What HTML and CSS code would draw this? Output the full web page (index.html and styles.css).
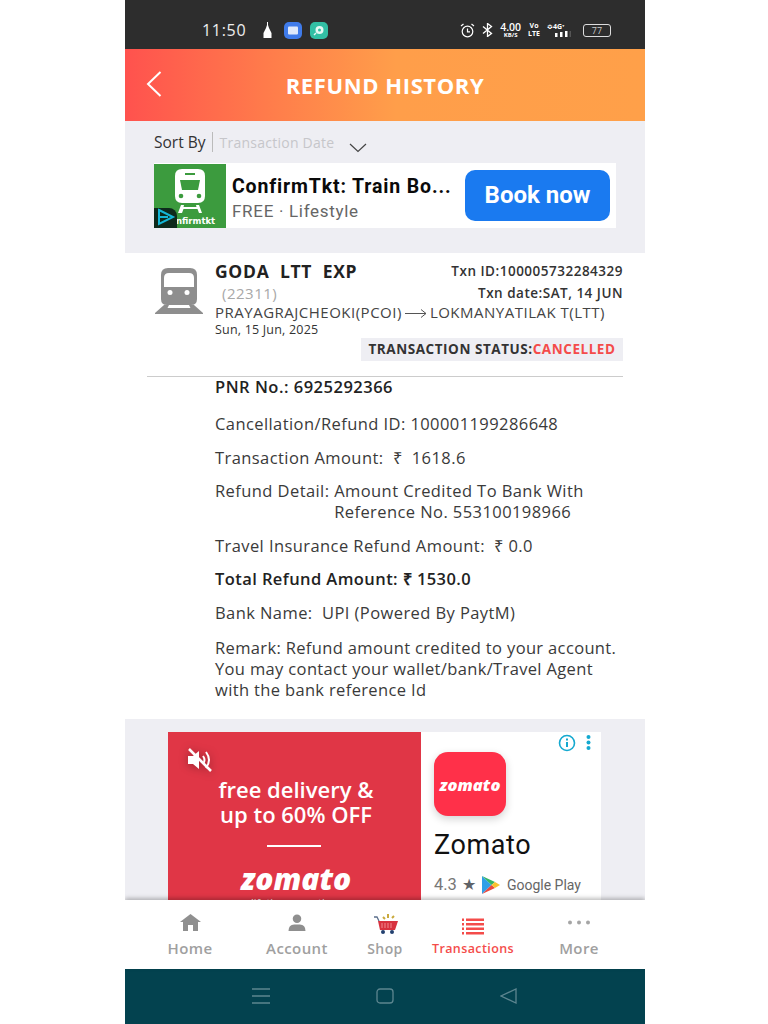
FILE: index.html
```html
<!DOCTYPE html>
<html lang="en">
<head>
    <meta charset="UTF-8">
    <meta name="viewport" content="width=device-width, initial-scale=1.0">
    <title>Refund History</title>
    <link rel="stylesheet" href="styles.css">
</head>
<body>
    <div class="phone">
        <div class="status-bar">
            <div class="status-left">
                <span class="clock">11:50</span>
                <svg class="st-bottle" width="9" height="16" viewBox="0 0 9 16"><path d="M4 0h1v3l1 3 2.500 5v5H.5v-5L3 6l1-3z" fill="#fff"/></svg>
                <svg width="18" height="17" viewBox="0 0 18 17"><rect width="18" height="17" rx="5" fill="#3f7bea"/><rect x="4" y="4.500" width="10" height="8" rx="1" fill="#dfe9fb"/></svg>
                <svg width="18" height="17" viewBox="0 0 18 17"><rect width="18" height="17" rx="5" fill="#32bfa4"/><circle cx="9.500" cy="8" r="4" fill="#e6f8f4"/><circle cx="9.500" cy="8" r="1.500" fill="#32bfa4"/><path d="M6 11l-2 2" stroke="#e6f8f4" stroke-width="1.500"/></svg>
            </div>
            <div class="status-right">
                <svg width="15" height="15" viewBox="0 0 15 15" fill="none" stroke="#fff" stroke-width="1.200"><circle cx="7.500" cy="8.500" r="5.300"/><path d="M7.500 5.500v3.300h2.500M1 3l2.500-2M14 3l-2.500-2"/></svg>
                <svg width="11" height="14" viewBox="0 0 11 14" fill="none" stroke="#fff" stroke-width="1.300"><path d="M1 3.500l8.500 7L5.500 13.500V.5L9.500 3.500 1 10.500"/></svg>
                <div class="speed"><span>4.00</span><small>KB/S</small></div>
                <div class="volte"><span>Vo</span><span>LTE</span></div>
                <div class="net">
                    <span class="net-label">≎4G⁺</span>
                    <svg width="24" height="6" viewBox="0 0 24 6" fill="#fff"><rect x="8" y="2" width="2.500" height="4"/><rect x="13" y="1" width="2.500" height="5"/><rect x="18" y="0" width="2.500" height="6"/><rect x="22.500" y="0" width="1.500" height="6" fill="#555"/></svg>
                </div>
                <div class="battery"><span>77</span></div>
            </div>
        </div>

        <div class="top-header">
            <svg class="back" width="18" height="28" viewBox="0 0 18 28" fill="none" stroke="#fff" stroke-width="2"><path d="M15.500 2L3 14l12.500 12"/></svg>
            <span class="top-title">REFUND HISTORY</span>
        </div>

        <div class="sort-section">
            <div class="sort-row">
                <span class="sort-label">Sort By</span>
                <span class="sort-value">Transaction Date</span>
                <svg class="chevron" width="18" height="10" viewBox="0 0 18 10" fill="none" stroke="#444" stroke-width="1.200"><path d="M1 1l8 7.500L17 1"/></svg>
            </div>
            <div class="ad-banner">
                <div class="ad-logo">
                    <svg width="32" height="44" viewBox="0 0 32 44" fill="#fff"><path d="M8 0h16q7 0 7 7v20q0 7-7 7H8q-7 0-7-7V7q0-7 7-7z"/><path d="M6 11h20l-2 10H8z" fill="#3c9b3e"/><rect x="11" y="4" width="10" height="2" fill="#3c9b3e"/><circle cx="7" cy="27" r="2.300" fill="#3c9b3e"/><circle cx="25" cy="27" r="2.300" fill="#3c9b3e"/><path d="M7 36h3l-.5 2h13l-.5-2h3l3 8h-3l-1.500-4H9.500L8 44H4z"/></svg>
                    <span class="ad-logo-text">nfirmtkt</span>
                    <div class="play-badge">
                        <svg width="20" height="18" viewBox="0 0 20 18" fill="none" stroke="#14b6d6" stroke-width="2"><path d="M3 2l14 7-14 7zM3 9h9"/></svg>
                    </div>
                </div>
                <div class="ad-text">
                    <div class="ad-title">ConfirmTkt: Train Bo...</div>
                    <div class="ad-sub">FREE · Lifestyle</div>
                </div>
                <div class="book-btn">Book now</div>
            </div>
        </div>

        <div class="card">
            <div class="train-row">
                <svg class="train-icon" width="48" height="46" viewBox="0 0 48 46" fill="#8e8e8e"><path d="M13 0h22q7 0 7 7v24q0 6-6 6H12q-6 0-6-6V7q0-7 7-7z"/><path d="M14 5h20q5 0 5 5v9H9v-9q0-5 5-5z" fill="#fff"/><circle cx="15" cy="24.500" r="2.500" fill="#fff"/><circle cx="32" cy="24.500" r="2.500" fill="#fff"/><path d="M9 37h5l-1.500 3h23L34 37h5l9 8v1H0v-1z"/></svg>
                <div class="train-info">
                    <div class="line-one">
                        <span class="train-name">GODA&nbsp; LTT&nbsp; EXP</span>
                        <span class="txn">Txn ID:100005732284329</span>
                    </div>
                    <div class="line-two">
                        <span class="train-no">(22311)</span>
                        <span class="txn">Txn date:SAT, 14 JUN</span>
                    </div>
                    <div class="route">
                        <span>PRAYAGRAJCHEOKI(PCOI)</span>
                        <svg width="22" height="10" viewBox="0 0 22 10" fill="none" stroke="#555" stroke-width="1"><path d="M0 5.500h21M16 1.500l5 4-5 4"/></svg>
                        <span>LOKMANYATILAK T(LTT)</span>
                    </div>
                    <div class="journey-date">Sun, 15 Jun, 2025</div>
                </div>
            </div>
            <div class="status-wrap">
                <div class="txn-status">TRANSACTION STATUS:<span class="cancelled">CANCELLED</span></div>
            </div>
            <div class="divider"></div>
            <div class="details">
                <p class="pnr">PNR No.: 6925292366</p>
                <p class="d-row first">Cancellation/Refund ID: 100001199286648</p>
                <p class="d-row">Transaction Amount:&nbsp; ₹&nbsp; 1618.6</p>
                <div class="d-row refund-detail">
                    <span>Refund Detail:&nbsp;</span>
                    <span>Amount Credited To Bank With<br>Reference No. 553100198966</span>
                </div>
                <p class="d-row">Travel Insurance Refund Amount:&nbsp; ₹ 0.0</p>
                <p class="d-row total">Total Refund Amount: ₹ 1530.0</p>
                <p class="d-row">Bank Name:&nbsp; UPI (Powered By PaytM)</p>
                <p class="d-row remark">Remark: Refund amount credited to your account.<br>You may contact your wallet/bank/Travel Agent<br>with the bank reference Id</p>
            </div>
        </div>

        <div class="ad-section">
            <div class="video-ad">
                <div class="ad-red">
                    <svg class="mute" width="26" height="24" viewBox="0 0 26 24" fill="none" stroke="#fff"><path d="M1 8h5l6-5v18l-6-5H1z" fill="#fff" stroke="none"/><path d="M16 8q3 4 0 8M19 4q6 8 0 16" stroke-width="2"/><path d="M2 1l22 22" stroke-width="2.500"/></svg>
                    <div class="ad-offer">free delivery &amp;<br>up to 60% OFF</div>
                    <div class="ad-rule"></div>
                    <div class="ad-brand">zomato</div>
                    <div class="ad-tag">lifetime over time</div>
                </div>
                <div class="ad-white">
                    <svg class="info" width="18" height="18" viewBox="0 0 18 18" fill="none" stroke="#14a9d0" stroke-width="1.600"><circle cx="9" cy="9" r="7.500"/><path d="M9 8v5M9 4.500v2" stroke-width="2"/></svg>
                    <svg class="dots" width="5" height="15" viewBox="0 0 5 15" fill="#14a9d0"><circle cx="2.500" cy="2" r="2"/><circle cx="2.500" cy="7.500" r="2"/><circle cx="2.500" cy="13" r="2"/></svg>
                    <div class="app-icon"><span>zomato</span></div>
                    <div class="app-name">Zomato</div>
                    <div class="app-meta">
                        <span>4.3</span>
                        <span class="star">★</span>
                        <svg class="play-logo" width="18" height="18" viewBox="0 0 18 18"><path d="M0 0l9.500 9L0 18z" fill="#2f9fe8"/><path d="M0 0l13 6-3.500 3z" fill="#37b565"/><path d="M0 18l13-6-3.500-3z" fill="#e9493f"/><path d="M13 6l5 3-5 3-3.500-3z" fill="#f9c22e"/></svg>
                        <span class="gp">Google Play</span>
                    </div>
                </div>
            </div>
        </div>

        <div class="tab-bar">
            <div class="tab">
                <svg width="21" height="17" viewBox="0 0 21 17" fill="#8f8f8f"><path d="M10.500 0L21 8h-3v9h-5v-6H8v6H3V8H0z"/></svg>
                <span>Home</span>
            </div>
            <div class="tab">
                <svg width="18" height="18" viewBox="0 0 18 18" fill="#8f8f8f"><circle cx="9" cy="5" r="4.500"/><path d="M0 18q0-7 6-7h6q6 0 6 7z"/></svg>
                <span>Account</span>
            </div>
            <div class="tab tab-shop">
                <svg width="24" height="21" viewBox="0 0 24 21"><path d="M0 4h3l2 4" stroke="#5b6f8c" stroke-width="1.300" fill="none"/><path d="M4 8h20l-3 9H6z" fill="#d8323f"/><path d="M8 10v5M11 10v5M14 10v5M17 10v5" stroke="#f08a90" stroke-width="1"/><circle cx="9" cy="19" r="2" fill="#23406f"/><circle cx="18" cy="19" r="2" fill="#23406f"/><path d="M9 4l2 2M14 1v4M20 3l-2 2" stroke="#c9a93c" stroke-width="2"/></svg>
                <span>Shop</span>
            </div>
            <div class="tab tab-active">
                <svg width="22" height="16" viewBox="0 0 22 16" fill="#f44c4a"><rect width="2" height="2.500"/><rect x="4" width="18" height="2.500"/><rect y="4.500" width="2" height="2.500"/><rect x="4" y="4.500" width="18" height="2.500"/><rect y="9" width="2" height="2.500"/><rect x="4" y="9" width="18" height="2.500"/><rect y="13.500" width="2" height="2.500"/><rect x="4" y="13.500" width="18" height="2.500"/></svg>
                <span>Transactions</span>
            </div>
            <div class="tab">
                <svg width="24" height="17" viewBox="0 0 24 17" fill="#a5a5a5"><circle cx="3" cy="8.500" r="2"/><circle cx="12" cy="8.500" r="2"/><circle cx="21" cy="8.500" r="2"/></svg>
                <span>More</span>
            </div>
        </div>

        <div class="nav-bar">
            <svg width="18" height="16" viewBox="0 0 18 16" stroke="#5d8690" stroke-width="1.300"><path d="M0 1h18M0 8h18M0 15h18"/></svg>
            <svg width="18" height="16" viewBox="0 0 18 16" fill="none" stroke="#5d8690" stroke-width="1.300"><rect x="1" y="1" width="16" height="14" rx="3"/></svg>
            <svg width="17" height="16" viewBox="0 0 17 16" fill="none" stroke="#5d8690" stroke-width="1.300"><path d="M16 1v14L1 8z"/></svg>
        </div>
    </div>
</body>
</html>
```

FILE: styles.css
```css
body {
    font-family: 'Open Sans', sans-serif;
    margin: 0;
    padding: 0;
    background-color: #fff;
}
p {
    margin: 0;
}
.phone {
    width: 520px;
    height: 1024px;
    margin-left: 125px;
    overflow: hidden;
}

/* status bar */
.status-bar {
    height: 49px;
    background-color: #2d2d2d;
    display: flex;
    justify-content: space-between;
    align-items: center;
    padding: 11px 34px 0 77px;
    box-sizing: border-box;
    color: #fff;
}
.status-left {
    display: flex;
    align-items: center;
    gap: 8px;
}
.clock {
    font-size: 16px;
    letter-spacing: 0.7px;
    margin-right: 9px;
    color: #eee;
}
.st-bottle {
    margin-right: 4px;
}
.status-right {
    display: flex;
    align-items: center;
    gap: 7px;
}
.speed {
    display: flex;
    flex-direction: column;
    align-items: center;
    font-weight: 600;
    line-height: 10px;
    font-size: 10.5px;
}
.speed small {
    font-size: 6px;
    font-weight: 700;
    line-height: 7px;
}
.volte {
    display: flex;
    flex-direction: column;
    align-items: center;
    font-size: 7px;
    font-weight: 700;
    line-height: 8px;
}
.net {
    display: flex;
    flex-direction: column;
    width: 25px;
}
.net-label {
    font-size: 7px;
    font-weight: 700;
    line-height: 8px;
    white-space: nowrap;
}
.battery {
    width: 26px;
    height: 11px;
    margin-left: 4px;
    border: 1px solid #ddd;
    border-radius: 3px;
    font-size: 9px;
    line-height: 11px;
    text-align: center;
    color: #ccc;
}

/* orange header */
.top-header {
    height: 72px;
    background: linear-gradient(90deg, #ff524e 0%, #ff7b4b 27%, #ff9e4a 52%, #ffa049 100%);
    display: flex;
    align-items: center;
    justify-content: center;
    position: relative;
}
.back {
    position: absolute;
    left: 20px;
    top: 21px;
}
.top-title {
    color: #fff;
    font-size: 22px;
    font-weight: 700;
    letter-spacing: 0.6px;
}

/* sort + banner */
.sort-section {
    height: 132px;
    background-color: #eeeef3;
    padding: 10px 29px 0;
    box-sizing: border-box;
}
.sort-row {
    height: 22px;
    display: flex;
    align-items: center;
    margin-bottom: 10px;
}
.sort-label {
    font-size: 15.5px;
    color: #333;
    padding-right: 6px;
    border-right: 1px solid #bbb;
    line-height: 20px;
}
.sort-value {
    font-size: 14px;
    letter-spacing: 0.25px;
    color: #c6c6ca;
    margin-left: 7px;
}
.chevron {
    margin: 12px 0 0 15px;
}
.ad-banner {
    height: 65px;
    width: 462px;
    background-color: #fff;
    display: flex;
    align-items: center;
}
.ad-logo {
    width: 72px;
    height: 64px;
    background-color: #3c9b3e;
    position: relative;
    text-align: center;
    box-sizing: border-box;
    padding-top: 5px;
}
.ad-logo-text {
    position: absolute;
    left: 22px;
    bottom: 2px;
    font-family: 'DejaVu Sans', sans-serif;
    font-size: 8.5px;
    font-weight: 700;
    color: #fff;
}
.play-badge {
    position: absolute;
    left: 0;
    bottom: 0;
    width: 23px;
    height: 20px;
    background-color: #0e2a1c;
    border-top-right-radius: 8px;
}
.ad-text {
    flex: 1;
    padding: 8px 0 0 6px;
    font-family: 'Roboto', sans-serif;
}
.ad-title {
    font-size: 19.5px;
    font-weight: 700;
    color: #0a0a0a;
    letter-spacing: 0.85px;
    line-height: 24px;
}
.ad-sub {
    font-size: 17px;
    color: #666;
    letter-spacing: 0.7px;
    line-height: 25px;
}
.book-btn {
    width: 145px;
    height: 51px;
    margin-right: 6px;
    background-color: #1a7af0;
    border-radius: 10px;
    color: #fff;
    font-family: 'Roboto', sans-serif;
    font-size: 24px;
    font-weight: 700;
    line-height: 51px;
    text-align: center;
}

/* refund card */
.card {
    height: 466px;
    background-color: #fff;
    box-sizing: border-box;
    color: #333;
}
.train-row {
    display: flex;
    padding: 7px 22px 0 30px;
}
.train-icon {
    margin-top: 8px;
    flex-shrink: 0;
}
.train-info {
    flex: 1;
    margin-left: 12px;
}
.line-one,
.line-two {
    display: flex;
    justify-content: space-between;
    align-items: center;
    height: 22px;
}
.line-two {
    height: 21px;
}
.train-name {
    font-size: 17.5px;
    font-weight: 700;
    letter-spacing: 0.7px;
    color: #222;
}
.train-no {
    font-size: 15px;
    letter-spacing: 0.5px;
    color: #a8a8a8;
    margin-left: 7px;
}
.txn {
    font-size: 13.5px;
    font-weight: 600;
    letter-spacing: 0.5px;
    color: #333;
}
.route {
    display: flex;
    align-items: center;
    gap: 3px;
    height: 17px;
    font-size: 15px;
    letter-spacing: 0.5px;
    color: #444;
    white-space: nowrap;
}
.route svg {
    margin-top: 3px;
}
.journey-date {
    font-size: 12.5px;
    letter-spacing: 0.2px;
    color: #333;
    line-height: 17px;
    margin-top: 1px;
}
.status-wrap {
    display: flex;
    justify-content: flex-end;
    padding-right: 22px;
}
.txn-status {
    width: 262px;
    height: 23px;
    box-sizing: border-box;
    background-color: #eeeef3;
    font-size: 13.5px;
    font-weight: 700;
    letter-spacing: 0.55px;
    line-height: 23px;
    text-align: center;
    color: #333;
}
.cancelled {
    color: #f44c4a;
}
.divider {
    height: 1px;
    margin: 15px 22px 0;
    background-color: #ccc;
}
.details {
    padding: 0 20px 0 90px;
}
.pnr {
    font-size: 16.5px;
    font-weight: 600;
    letter-spacing: 0.5px;
    line-height: 20px;
    color: #222;
}
.d-row {
    font-size: 16.5px;
    letter-spacing: 0.42px;
    line-height: 21px;
    margin-top: 12.5px;
    color: #3a3a3a;
    white-space: nowrap;
}
.d-row.first {
    margin-top: 16px;
}
.refund-detail {
    display: flex;
}
.total {
    font-weight: 600;
    color: #222;
}
.remark {
    margin-top: 14px;
    letter-spacing: 0.35px;
}

/* video ad */
.ad-section {
    height: 181px;
    background-color: #eeeef3;
    padding: 13px 43px 0;
    box-sizing: border-box;
    overflow: hidden;
}
.video-ad {
    display: flex;
    height: 190px;
}
.ad-red {
    width: 253px;
    background-color: #e03646;
    color: #fff;
    text-align: center;
    position: relative;
    box-sizing: border-box;
    padding: 45px 0 0 3px;
}
.mute {
    position: absolute;
    left: 19px;
    top: 16px;
    filter: drop-shadow(0 1px 5px rgba(0, 0, 0, 0.35));
}
.ad-offer {
    font-size: 22px;
    font-weight: 600;
    line-height: 25px;
}
.ad-rule {
    width: 54px;
    height: 2px;
    margin: 18px auto 0;
    background-color: #fff;
    position: relative;
    left: -2px;
}
.ad-brand {
    font-size: 30px;
    font-style: italic;
    font-weight: 800;
    line-height: 30px;
    margin-top: 17px;
}
.ad-tag {
    font-size: 11px;
    line-height: 12px;
    margin-top: 3px;
}
.ad-white {
    width: 180px;
    background-color: #fff;
    position: relative;
    box-sizing: border-box;
    padding: 20px 0 0 13px;
}
.info {
    position: absolute;
    right: 25px;
    top: 2px;
}
.dots {
    position: absolute;
    right: 10px;
    top: 3px;
}
.app-icon {
    width: 72px;
    height: 64px;
    background-color: #ff3049;
    border-radius: 14px;
    box-shadow: 0 3px 8px rgba(0, 0, 0, 0.18);
    display: flex;
    align-items: center;
    justify-content: center;
}
.app-icon span {
    font-size: 16.5px;
    font-style: italic;
    font-weight: 800;
    color: #fff;
}
.app-name {
    font-family: 'Roboto', sans-serif;
    font-size: 27px;
    line-height: 30px;
    margin-top: 14px;
    color: #111;
    letter-spacing: 0.6px;
}
.app-meta {
    display: flex;
    align-items: center;
    gap: 5px;
    margin-top: 15px;
    font-family: 'Roboto', sans-serif;
    font-size: 16.5px;
    color: #777;
}
.star {
    color: #5f6368;
    font-size: 16px;
}
.play-logo {
    margin-left: 1px;
}
.gp {
    font-size: 14px;
    color: #666;
    margin-left: 2px;
}

/* bottom tabs */
.tab-bar {
    height: 69px;
    background-color: #fff;
    display: grid;
    grid-template-columns: 130px 84px 90px 88px 124px;
    box-shadow: 0 -2px 4px rgba(0, 0, 0, 0.25);
    position: relative;
}
.tab {
    display: flex;
    flex-direction: column;
    align-items: center;
    justify-content: flex-start;
    padding-top: 14px;
    box-sizing: border-box;
    font-size: 15px;
    font-weight: 600;
    color: #a0a0a0;
    letter-spacing: 0.4px;
}
.tab svg {
    height: 17px;
}
.tab span {
    margin-top: 8px;
    line-height: 18px;
    white-space: nowrap;
}
.tab-shop {
    padding-top: 13px;
}
.tab-shop svg {
    height: 21px;
    margin-left: 3px;
}
.tab-shop span {
    font-size: 14px;
    margin: 6px 0 0 2px;
}
.tab-active {
    color: #f44c4a;
    font-size: 12.5px;
    padding-top: 18px;
}
.tab-active span {
    margin-top: 5px;
}

/* android nav */
.nav-bar {
    height: 55px;
    background-color: #03424f;
    display: flex;
    justify-content: center;
    align-items: center;
    gap: 106px;
    padding: 0 2px 1px 0;
    box-sizing: border-box;
}
```
